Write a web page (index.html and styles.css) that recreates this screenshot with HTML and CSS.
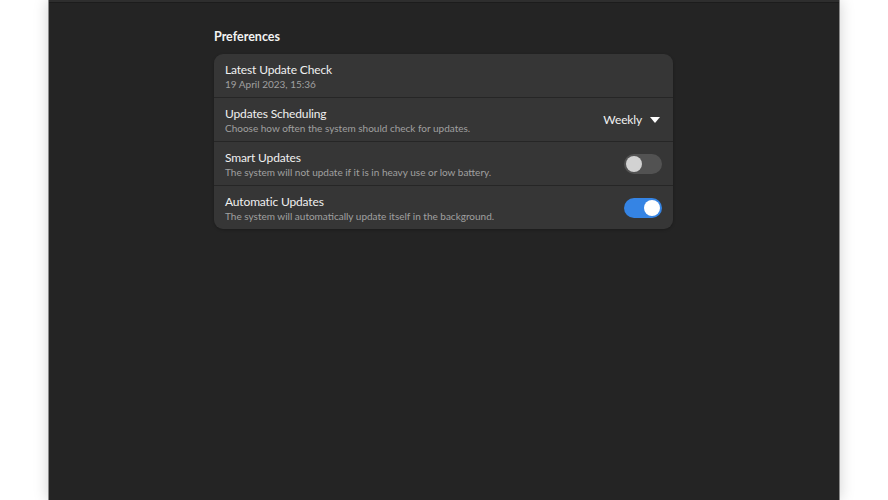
FILE: index.html
```html
<!DOCTYPE html>
<html>
<head>
    <title>Software Updates</title>
    <link rel="stylesheet" href="styles.css">
</head>
<body>
    <div class="window">
        <div class="headerbar"></div>
        <div class="content">
            <h2 class="group-title">Preferences</h2>
            <div class="list">
                <div class="row">
                    <div class="row-text">
                        <div class="row-title">Latest Update Check</div>
                        <div class="row-subtitle">19 April 2023, 15:36</div>
                    </div>
                </div>
                <div class="row">
                    <div class="row-text">
                        <div class="row-title">Updates Scheduling</div>
                        <div class="row-subtitle">Choose how often the system should check for updates.</div>
                    </div>
                    <div class="dropdown">
                        <span>Weekly</span>
                        <svg width="10" height="6" viewBox="0 0 10 6"><path d="M0 0h10L5 6z" fill="#fff"/></svg>
                    </div>
                </div>
                <div class="row">
                    <div class="row-text">
                        <div class="row-title">Smart Updates</div>
                        <div class="row-subtitle">The system will not update if it is in heavy use or low battery.</div>
                    </div>
                    <div class="switch"><div class="knob"></div></div>
                </div>
                <div class="row">
                    <div class="row-text">
                        <div class="row-title">Automatic Updates</div>
                        <div class="row-subtitle">The system will automatically update itself in the background.</div>
                    </div>
                    <div class="switch on"><div class="knob"></div></div>
                </div>
            </div>
        </div>
    </div>
</body>
</html>
```

FILE: styles.css
```css
body {
    margin: 0;
    padding: 0;
    background-color: #ffffff;
    font-family: Lato, "Noto Sans", sans-serif;
    color: #ffffff;
}

.window {
    width: 790px;
    height: 500px;
    margin-left: 48px;
    background-color: #242424;
    border-left: 1px solid #8a8a8a;
    border-right: 1px solid #8a8a8a;
    box-shadow: 0 0 14px rgba(0, 0, 0, 0.18);
}

.headerbar {
    height: 2px;
    background-color: #2e2e2e;
    border-bottom: 1px solid #1c1c1c;
}

.content {
    width: 459px;
    margin-left: 165px;
    padding-top: 26px;
}

.group-title {
    font-size: 12.5px;
    font-weight: bold;
    line-height: 16px;
    margin: 0 0 9px 0;
    color: #f2f2f2;
}

.list {
    background-color: #363636;
    border-radius: 9px;
    box-shadow: 0 1px 3px rgba(0, 0, 0, 0.25);
    overflow: hidden;
}

.row {
    display: flex;
    align-items: center;
    height: 43px;
    padding: 0 11px;
    border-bottom: 1px solid #262626;
}

.row:last-child {
    border-bottom: none;
}

.row-text {
    flex: 1;
    padding-top: 2px;
}

.row-title {
    font-size: 12px;
    letter-spacing: -0.15px;
    line-height: 16px;
    color: #f0f0f0;
}

.row-subtitle {
    font-size: 10px;
    line-height: 13px;
    color: #a0a0a0;
}

.dropdown {
    display: flex;
    align-items: center;
    gap: 8px;
    font-size: 12px;
    letter-spacing: -0.15px;
    color: #f0f0f0;
    margin-right: 2px;
}

.switch {
    width: 38px;
    height: 20px;
    border-radius: 10px;
    background-color: #525252;
    box-sizing: border-box;
    padding: 2px;
    display: flex;
}

.switch .knob {
    width: 16px;
    height: 16px;
    border-radius: 50%;
    background-color: #d2d2d2;
}

.switch.on {
    background-color: #3584e4;
    justify-content: flex-end;
}

.switch.on .knob {
    background-color: #ffffff;
}
```
